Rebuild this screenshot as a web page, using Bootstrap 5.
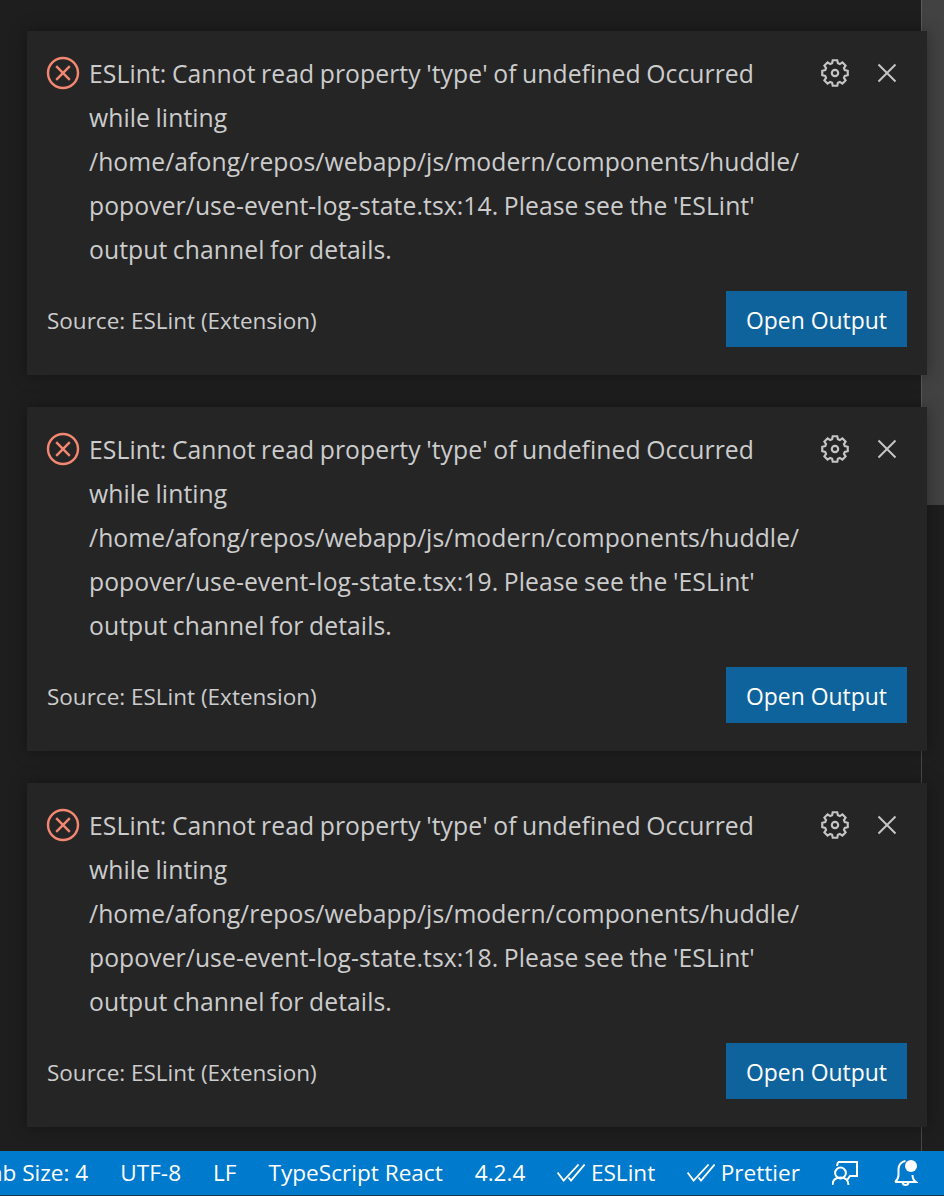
<!doctype html>
<html lang="en"><head><meta charset="utf-8">
<link href="https://cdn.jsdelivr.net/npm/bootstrap@5.3.0/dist/css/bootstrap.min.css" rel="stylesheet">
<style>
html,body{height:100%;margin:0}
body{background:#1e1e1e;font-family:"Open Sans","Noto Sans",sans-serif;overflow:hidden;width:944px;height:1196px;position:relative}
.editor-pane{height:1151px;padding:31px 17px 0 27px;gap:32px}
.scroll-gutter{position:absolute;top:0;left:921px;width:23px;height:1151px;border-left:1px solid #484848}
.scroll-thumb{position:absolute;top:0;left:921px;width:23px;height:505px;background:#424242;border-left:1px solid #5a5a5a}
.notice{position:relative;width:900px;height:344px;background:#252526;box-shadow:0 0 16px rgba(0,0,0,.36);color:#ccc;padding:21px 20px 28px 20px;flex:none}
.notice-text{font-size:24.7px;letter-spacing:.08px;word-spacing:-.95px;line-height:44px;margin-left:42px;white-space:nowrap;color:#ccc}
.err-icon{position:absolute;left:19px;top:25px;width:34px;height:34px}
.gear-icon{position:absolute;left:793px;top:27px;width:30px;height:30px}
.close-icon{position:absolute;left:844px;top:26px;width:32px;height:32px}
.notice-foot{margin-top:19px;height:56px}
.source-line{font-size:22.5px;color:#ccc;padding-top:4px}
.open-btn{background:#0e639c;color:#fff;font-size:22.9px;width:181px;height:56px;border-radius:0;border:0;padding:4px 0 0}
.status-strip{height:45px;background:#007acc;color:#fff;font-size:22.6px;white-space:nowrap;border-bottom:1px solid #16324a;padding-right:26px;gap:32px;overflow:hidden}
.status-item{flex:none;gap:5.5px;height:44px}
.status-tick{width:28px;height:18px;flex:none}
.status-person{width:26px;height:26px;flex:none}
.status-bell{width:28px;height:26px;flex:none}
</style></head><body>
<div class="scroll-gutter"></div><div class="scroll-thumb"></div>
<main class="editor-pane d-flex flex-column">

<section class="notice">
<svg class="err-icon" viewBox="0 0 34 34" fill="none" stroke="#f48771" stroke-width="2.4"><circle cx="17" cy="17" r="15"/><path d="M10.2 10.2l13.6 13.6M23.8 10.2L10.2 23.8"/></svg>
<svg class="gear-icon" viewBox="-8 -8 16 16" fill="none" stroke="#c5c5c5" stroke-width="1.15"><polygon points="-1.55,5.2 -1.2,6.8 1.2,6.8 1.55,5.2 2.58,4.77 3.96,5.66 5.66,3.96 4.77,2.58 5.2,1.55 6.8,1.2 6.8,-1.2 5.2,-1.55 4.77,-2.58 5.66,-3.96 3.96,-5.66 2.58,-4.77 1.55,-5.2 1.2,-6.8 -1.2,-6.8 -1.55,-5.2 -2.58,-4.77 -3.96,-5.66 -5.66,-3.96 -4.77,-2.58 -5.2,-1.55 -6.8,-1.2 -6.8,1.2 -5.2,1.55 -4.77,2.58 -5.66,3.96 -3.96,5.66 -2.58,4.77"/><circle r="1.7"/></svg>
<svg class="close-icon" viewBox="0 0 32 32" fill="none" stroke="#c5c5c5" stroke-width="2"><path d="M7.500 7.500l17 17M24.500 7.500l-17 17"/></svg>
<div class="notice-text">ESLint: Cannot read property 'type' of undefined Occurred<br>while linting<br>/home/afong/repos/webapp/js/modern/components/huddle/<br>popover/use-event-log-state.tsx:14. Please see the 'ESLint'<br>output channel for details.</div>
<div class="notice-foot d-flex justify-content-between align-items-center"><div class="source-line">Source: ESLint (Extension)</div><button class="btn open-btn">Open Output</button></div>
</section>

<section class="notice">
<svg class="err-icon" viewBox="0 0 34 34" fill="none" stroke="#f48771" stroke-width="2.4"><circle cx="17" cy="17" r="15"/><path d="M10.2 10.2l13.6 13.6M23.8 10.2L10.2 23.8"/></svg>
<svg class="gear-icon" viewBox="-8 -8 16 16" fill="none" stroke="#c5c5c5" stroke-width="1.15"><polygon points="-1.55,5.2 -1.2,6.8 1.2,6.8 1.55,5.2 2.58,4.77 3.96,5.66 5.66,3.96 4.77,2.58 5.2,1.55 6.8,1.2 6.8,-1.2 5.2,-1.55 4.77,-2.58 5.66,-3.96 3.96,-5.66 2.58,-4.77 1.55,-5.2 1.2,-6.8 -1.2,-6.8 -1.55,-5.2 -2.58,-4.77 -3.96,-5.66 -5.66,-3.96 -4.77,-2.58 -5.2,-1.55 -6.8,-1.2 -6.8,1.2 -5.2,1.55 -4.77,2.58 -5.66,3.96 -3.96,5.66 -2.58,4.77"/><circle r="1.7"/></svg>
<svg class="close-icon" viewBox="0 0 32 32" fill="none" stroke="#c5c5c5" stroke-width="2"><path d="M7.500 7.500l17 17M24.500 7.500l-17 17"/></svg>
<div class="notice-text">ESLint: Cannot read property 'type' of undefined Occurred<br>while linting<br>/home/afong/repos/webapp/js/modern/components/huddle/<br>popover/use-event-log-state.tsx:19. Please see the 'ESLint'<br>output channel for details.</div>
<div class="notice-foot d-flex justify-content-between align-items-center"><div class="source-line">Source: ESLint (Extension)</div><button class="btn open-btn">Open Output</button></div>
</section>

<section class="notice">
<svg class="err-icon" viewBox="0 0 34 34" fill="none" stroke="#f48771" stroke-width="2.4"><circle cx="17" cy="17" r="15"/><path d="M10.2 10.2l13.6 13.6M23.8 10.2L10.2 23.8"/></svg>
<svg class="gear-icon" viewBox="-8 -8 16 16" fill="none" stroke="#c5c5c5" stroke-width="1.15"><polygon points="-1.55,5.2 -1.2,6.8 1.2,6.8 1.55,5.2 2.58,4.77 3.96,5.66 5.66,3.96 4.77,2.58 5.2,1.55 6.8,1.2 6.8,-1.2 5.2,-1.55 4.77,-2.58 5.66,-3.96 3.96,-5.66 2.58,-4.77 1.55,-5.2 1.2,-6.8 -1.2,-6.8 -1.55,-5.2 -2.58,-4.77 -3.96,-5.66 -5.66,-3.96 -4.77,-2.58 -5.2,-1.55 -6.8,-1.2 -6.8,1.2 -5.2,1.55 -4.77,2.58 -5.66,3.96 -3.96,5.66 -2.58,4.77"/><circle r="1.7"/></svg>
<svg class="close-icon" viewBox="0 0 32 32" fill="none" stroke="#c5c5c5" stroke-width="2"><path d="M7.500 7.500l17 17M24.500 7.500l-17 17"/></svg>
<div class="notice-text">ESLint: Cannot read property 'type' of undefined Occurred<br>while linting<br>/home/afong/repos/webapp/js/modern/components/huddle/<br>popover/use-event-log-state.tsx:18. Please see the 'ESLint'<br>output channel for details.</div>
<div class="notice-foot d-flex justify-content-between align-items-center"><div class="source-line">Source: ESLint (Extension)</div><button class="btn open-btn">Open Output</button></div>
</section>

</main>
<footer class="status-strip d-flex justify-content-end align-items-center">
<div class="status-item d-flex align-items-center">Tab Size: 4</div>
<div class="status-item d-flex align-items-center">UTF-8</div>
<div class="status-item d-flex align-items-center">LF</div>
<div class="status-item d-flex align-items-center">TypeScript React</div>
<div class="status-item d-flex align-items-center">4.2.4</div>
<div class="status-item d-flex align-items-center"><svg class="status-tick" viewBox="0 0 28 18" fill="none" stroke="#fff" stroke-width="1.8"><path d="M0.6 8.500l6 8 15-16M11.500 13.500l2.500 3 13.600-16"/></svg>ESLint</div>
<div class="status-item d-flex align-items-center"><svg class="status-tick" viewBox="0 0 28 18" fill="none" stroke="#fff" stroke-width="1.8"><path d="M0.6 8.500l6 8 15-16M11.500 13.500l2.500 3 13.600-16"/></svg>Prettier</div>
<div class="status-item d-flex align-items-center"><svg class="status-person" viewBox="1 0 26 26" fill="none" stroke="#fff" stroke-width="2"><circle cx="9.500" cy="13" r="5.400"/><path d="M1.500 25c0-5 3.500-7.500 8-7.500s8 2.500 8 7.500M7 2h19v14h-7l-2.500 3.500M7 2l-1 4"/></svg></div>
<div class="status-item d-flex align-items-center"><svg class="status-bell" viewBox="-4 0 28 26" fill="none" stroke="#fff" stroke-width="2"><path d="M1 22h21c-3-2-3.500-4-3.500-7M1 22c2.500-2 3.500-4 3.500-7V9c0-4 3-7.500 7-8"/><path d="M8.500 22c0 4 6 4 6 0"/><circle cx="17" cy="6" r="6" fill="#fff" stroke="none"/></svg></div>
</footer>
</body></html>
